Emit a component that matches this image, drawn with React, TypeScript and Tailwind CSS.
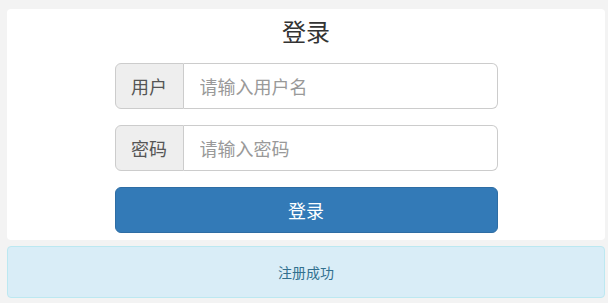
import React from 'react';

const font = { fontFamily: '"Noto Sans CJK SC", "Liberation Sans", sans-serif' };

export default function App() {
  return (
    <div className="w-[608px] h-[303px] bg-[#f3f3f3] pt-[9px] pl-[7px] pr-[3px]" style={font}>
      <div className="bg-white rounded-[4px] h-[231px] flex flex-col items-center pt-[9px]">
        <h3 className="text-[24px] leading-[26px] text-[#333]">登录</h3>
        <div className="w-[383px] mt-[19px] flex flex-col">
          <div className="flex h-[46px]">
            <span className="w-[69px] flex items-center justify-center bg-[#eee] border border-[#ccc] rounded-l-[6px] text-[18px] text-[#555]">
              用户
            </span>
            <input
              className="flex-1 min-w-0 border border-l-0 border-[#ccc] rounded-r-[6px] px-[16px] text-[18px] text-[#555] placeholder-[#999] outline-none"
              placeholder="请输入用户名"
            />
          </div>
          <div className="flex h-[46px] mt-[16px]">
            <span className="w-[69px] flex items-center justify-center bg-[#eee] border border-[#ccc] rounded-l-[6px] text-[18px] text-[#555]">
              密码
            </span>
            <input
              type="password"
              className="flex-1 min-w-0 border border-l-0 border-[#ccc] rounded-r-[6px] px-[16px] text-[18px] text-[#555] placeholder-[#999] outline-none"
              placeholder="请输入密码"
            />
          </div>
          <button className="mt-[16px] h-[46px] rounded-[6px] bg-[#337ab7] border border-[#2e6da4] text-white text-[18px]">
            登录
          </button>
        </div>
      </div>
      <div className="mt-[6px] h-[52px] rounded-[4px] bg-[#d9edf7] border border-[#bce8f1] flex items-center justify-center text-[14px] text-[#31708f]">
        注册成功
      </div>
    </div>
  );
}
